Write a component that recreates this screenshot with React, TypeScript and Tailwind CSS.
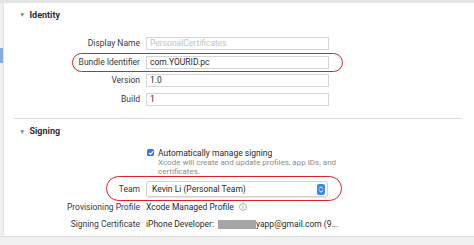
import React from 'react'

const labelCls = 'w-[142px] shrink-0 text-right pr-[6px] text-[#3a3a3a]'

function Field({ value, placeholder }: { value?: string; placeholder?: string }) {
    return (
        <div className="w-[183px] h-[13px] border border-[#d6d6d6] bg-white flex items-center px-[3px] leading-none">
            {value ? (
                <span className="text-[#2a2a2a]">{value}</span>
            ) : (
                <span className="text-[#c4c4c4]">{placeholder}</span>
            )}
        </div>
    )
}

function Row({ label, children, className = '' }: { label: string; children: React.ReactNode; className?: string }) {
    return (
        <div className={`flex items-center ${className}`}>
            <div className={labelCls}>{label}</div>
            {children}
        </div>
    )
}

function Section({ title }: { title: string }) {
    return (
        <div className="h-[10px] flex items-center gap-[4px] pl-[15px] font-bold text-[#2f2f2f] text-[9px]">
            <span className="text-[#8a8a8a] text-[6.5px]">▼</span>
            <span>{title}</span>
        </div>
    )
}

export default function App() {
    return (
        <div
            className="w-[474px] h-[245px] relative overflow-hidden bg-white text-[8.5px] leading-none"
            style={{ fontFamily: 'Roboto, "Liberation Sans", Arial, sans-serif' }}
        >
            <div className="h-[3px] bg-[#e4e4e4]" />
            <div className="flex h-[233px]">
                {/* left strip */}
                <div className="w-[4px] shrink-0 bg-[#f0f0f0] border-r border-[#e2e2e2] pt-[45px]">
                    <div className="w-[3px] h-[15px] bg-[#8aa9e0]" />
                </div>
                <div className="flex-1 pt-[7px]">
                    <Section title="Identity" />
                    <div className="mt-[17px] flex flex-col gap-[5.6px]">
                        <Row label="Display Name">
                            <Field placeholder="PersonalCertificates" />
                        </Row>
                        <Row label="Bundle Identifier">
                            <Field value="com.YOURID.pc" />
                        </Row>
                        <Row label="Version">
                            <Field value="1.0" />
                        </Row>
                        <Row label="Build">
                            <Field value="1" />
                        </Row>
                    </div>
                    <div className="mt-[12px] ml-[10px] w-[448px] h-px bg-[#dcdcdc]" />

                    <div className="mt-[8px]">
                        <Section title="Signing" />
                    </div>

                    <div className="mt-[11px] ml-[143px]">
                        <div className="h-[10px] flex items-center gap-[4px]">
                            <div className="w-[7px] h-[7px] rounded-[1.5px] bg-[#2f7cf0] flex items-center justify-center">
                                <svg width="6" height="6" viewBox="0 0 10 10">
                                    <path d="M2 5.2 L4.2 7.4 L8.2 2.6" stroke="white" strokeWidth="1.8" fill="none" strokeLinecap="round" strokeLinejoin="round" />
                                </svg>
                            </div>
                            <span className="text-[#2a2a2a]">Automatically manage signing</span>
                        </div>
                        <div className="ml-[11px] mt-[0.5px] text-[8px] text-[#8c8c8c] leading-[9px]">
                            <div>Xcode will create and update profiles, app IDs, and</div>
                            <div>certificates.</div>
                        </div>
                    </div>

                    <Row label="Team" className="mt-[5px]">
                        <div className="w-[182px] h-[16px] border border-[#d2d2d2] rounded-[3px] bg-white flex items-center justify-between pl-[5px] pr-[2px] shadow-[0_1px_0_#e6e6e6]">
                            <span className="text-[#2a2a2a]">Kevin Li (Personal Team)</span>
                            <div className="w-[8px] h-[11px] rounded-[2px] bg-[#3b86f2] flex items-center justify-center">
                                <svg width="6" height="9" viewBox="0 0 6 9">
                                    <path d="M1.3 3.4 L3 1.7 L4.7 3.4 M1.3 5.6 L3 7.3 L4.7 5.6" stroke="white" strokeWidth="1" fill="none" strokeLinecap="round" strokeLinejoin="round" />
                                </svg>
                            </div>
                        </div>
                    </Row>

                    <Row label="Provisioning Profile" className="mt-[5px] h-[10px]">
                        <span className="text-[#2a2a2a]">Xcode Managed Profile</span>
                        <span className="ml-[5px] w-[8px] h-[8px] rounded-full border border-[#b0b0b0] text-[#a0a0a0] text-[6px] flex items-center justify-center font-bold">i</span>
                    </Row>

                    <Row label="Signing Certificate" className="mt-[7px] h-[10px]">
                        <span className="text-[#2a2a2a]">iPhone Developer:</span>
                        <span className="ml-[4px] w-[38px] h-[9px] bg-[#a5a5a5]" />
                        <span className="text-[#2a2a2a]">yapp@gmail.com (9...</span>
                    </Row>
                </div>
            </div>
            <div className="h-[9px] bg-[#f0f0f0] border-t border-[#dcdcdc]" />

            {/* red highlight ovals */}
            <div className="absolute left-[72px] top-[53px] w-[271px] h-[19px] rounded-full border-[1.5px] border-[#d8232a]" />
            <div className="absolute left-[106px] top-[176px] w-[236px] h-[25px] rounded-full border-[1.5px] border-[#d8232a]" />
        </div>
    )
}
